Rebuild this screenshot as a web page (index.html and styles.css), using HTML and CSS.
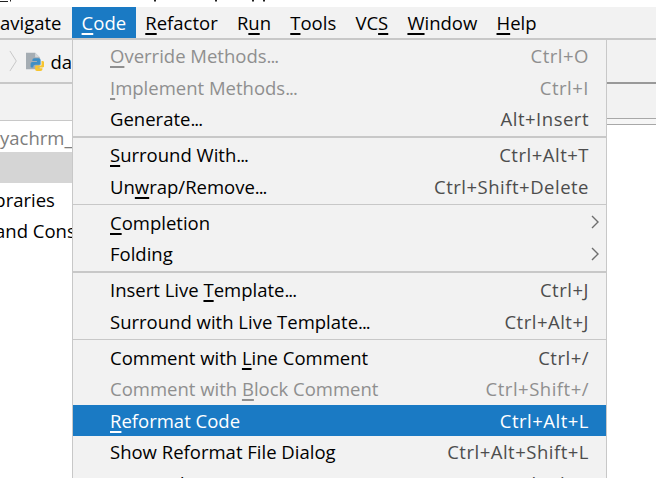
FILE: index.html
```html
<!DOCTYPE html>
<html lang="en">
<head>
<meta charset="utf-8">
<title>Code menu</title>
<link rel="stylesheet" href="styles.css">
</head>
<body>
<div class="strip">
  <svg class="strip-marks" width="656" height="7" viewBox="0 0 656 7">
    <path d="M0 1h8v1H0zM10 0h1v1.5h-1zM154 0h2v1.5h-2zM215 0h2v1.5h-2zM252 0h2v1.5h-2zM263 0h2v1.5h-2z" fill="#222"/>
  </svg>
</div>
<div class="menubar">
  <span class="top top-first">avigate</span>
  <span class="top active"><u>C</u>ode</span>
  <span class="top"><u>R</u>efactor</span>
  <span class="top">R<u>u</u>n</span>
  <span class="top"><u>T</u>ools</span>
  <span class="top">VC<u>S</u></span>
  <span class="top"><u>W</u>indow</span>
  <span class="top"><u>H</u>elp</span>
</div>
<div class="workspace">
  <div class="left">
    <div class="breadcrumb">
      <svg class="crumb-chevron" width="10" height="24" viewBox="0 0 10 24"><path d="M1 1l7 11-7 11" fill="none" stroke="#c4c4c4" stroke-width="1"/></svg>
      <svg class="py" width="20" height="24" viewBox="0 0 20 24">
        <path d="M0 3h10l5 5v13H0z" fill="#a5adb3"/>
        <path d="M10 3l5 5h-5z" fill="#d3d7da"/>
        <path d="M9 9h5a2 2 0 0 1 2 2v5h-6a2 2 0 0 0-2 2v1H6a1 1 0 0 1-1-1v-3a2 2 0 0 1 2-2h5v-1H7v-1a2 2 0 0 1 2-2z" fill="#3f8fc4"/>
        <path d="M17 12h1a2 2 0 0 1 2 2v3a2 2 0 0 1-2 2h-5v1h5v1a2 2 0 0 1-2 2h-4a2 2 0 0 1-2-2v-3a2 2 0 0 1 1-1h5a1 1 0 0 0 1-1z" fill="#f7c52f"/>
      </svg>
      <span class="crumb-name">da</span>
    </div>
    <div class="tabs-left"></div>
    <div class="project-title">yachrm_</div>
    <div class="tree-selected"></div>
    <div class="tree-row tree-libraries">Libraries</div>
    <div class="tree-row tree-scratches">and Consoles</div>
  </div>
  <div class="right">
    <div class="right-bar"></div>
    <div class="right-rule"></div>
    <div class="right-rule-second"></div>
    <em class="hint">的最后</em>
  </div>

  <div class="menu">
    <div class="item off"><span><u>O</u>verride Methods<span class="dots">...</span></span><span class="key">Ctrl+O</span></div>
    <div class="item off"><span><u>I</u>mplement Methods<span class="dots">...</span></span><span class="key">Ctrl+I</span></div>
    <div class="item"><span>Generate<span class="dots">...</span></span><span class="key">Alt+Insert</span></div>
    <div class="sep"></div>
    <div class="item"><span><u>S</u>urround With<span class="dots">...</span></span><span class="key">Ctrl+Alt+T</span></div>
    <div class="item"><span>Un<u>w</u>rap/Remove<span class="dots">...</span></span><span class="key">Ctrl+Shift+Delete</span></div>
    <div class="sep thin"></div>
    <div class="item"><span><u>C</u>ompletion</span><svg class="arrow" width="9" height="14" viewBox="0 0 9 14"><path d="M1 1l6 6-6 6" fill="none" stroke="#6e6e6e" stroke-width="1.4"/></svg></div>
    <div class="item"><span>Folding</span><svg class="arrow" width="9" height="14" viewBox="0 0 9 14"><path d="M1 1l6 6-6 6" fill="none" stroke="#6e6e6e" stroke-width="1.4"/></svg></div>
    <div class="sep"></div>
    <div class="item"><span>Insert Live <u>T</u>emplate<span class="dots">...</span></span><span class="key">Ctrl+J</span></div>
    <div class="item"><span>Surround with Live Template<span class="dots">...</span></span><span class="key">Ctrl+Alt+J</span></div>
    <div class="sep thin"></div>
    <div class="item"><span>Comment with <u>L</u>ine Comment</span><span class="key">Ctrl+/</span></div>
    <div class="item off"><span>Comment with <u>B</u>lock Comment</span><span class="key">Ctrl+Shift+/</span></div>
    <div class="item hot"><span><u>R</u>eformat Code</span><span class="key">Ctrl+Alt+L</span></div>
    <div class="item"><span>Show Reformat File Dialog</span><span class="key">Ctrl+Alt+Shift+L</span></div>
    <div class="item"><span>Auto-Indent Lines</span><span class="key">Ctrl+Alt+I</span></div>
  </div>
</div>
</body>
</html>
```
FILE: styles.css
```css
html, body {
  margin: 0;
  height: 100%;
  overflow: hidden;
  background: #fff;
  color: #000;
  font-family: "Open Sans", "Noto Sans", sans-serif;
  font-size: 18.5px;
}
u { text-underline-offset: 3px; text-decoration-thickness: 1.5px; }
.strip { height: 7px; background: #fff; }
.strip-marks { display: block; }
.menubar {
  height: 31px;
  background: #f2f2f2;
  display: flex;
  align-items: center;
  border-bottom: 2px solid #c8c8c8;
}
.top { padding: 0 9.6px; height: 31px; line-height: 31px; white-space: nowrap; }
.top-first { width: 72px; padding: 0; box-sizing: border-box; }
.active { background: #1a7ac4; color: #fff; }
.workspace { position: relative; height: 438px; display: flex; }
.left { width: 72px; overflow: hidden; }
.right { position: relative; flex: 1; overflow: hidden; }
.breadcrumb {
  height: 42px;
  background: #f2f2f2;
  border-bottom: 2px solid #c8c8c8;
  display: flex;
  align-items: center;
  padding-left: 9px;
  gap: 8px;
}
.crumb-name { margin-left: -2px; }
.tabs-left { height: 36px; background: #f2f2f2; border-bottom: 1px solid #c8c8c8; }
.project-title { height: 31px; line-height: 33px; color: #7d7d7d; white-space: nowrap; }
.tree-selected { height: 31px; background: #d5d5d5; }
.tree-row { height: 31px; line-height: 31px; white-space: nowrap; }
.tree-libraries { margin-top: 1px; text-indent: -20px; }
.tree-scratches { text-indent: -5px; }
.right-bar { height: 42px; background: #f2f2f2; border-bottom: 2px solid #999; }
.right-rule { height: 34px; background: #f2f2f2; border-bottom: 1px solid #a8a8a8; }
.right-rule-second { height: 5px; background: #f6f6f6; border-bottom: 1px solid #a8a8a8; }
.hint { position: absolute; left: -2px; top: 233px; color: #8a8a8a; font-family: "Noto Sans CJK SC", sans-serif; font-size: 17px; }
.menu {
  position: absolute;
  left: 72px;
  top: 0;
  width: 533px;
  background: #f2f2f2;
  border: solid #c8c8c8;
  border-width: 0 1px 0 1px;
}
.item {
  height: 31.5px;
  line-height: 31.5px;
  padding: 0 17px 0 37px;
  display: flex;
  justify-content: space-between;
  align-items: center;
  white-space: nowrap;
}
.dots { letter-spacing: -1px; }
.key { color: #4d4d4d; letter-spacing: 0.5px; }
.off, .off .key { color: #8f8f8f; }
.hot, .hot .key { background: #1a7ac4; color: #fff; }
.arrow { margin-right: -11px; }
.sep { height: 2px; margin: 1px 0 1.5px; background: #c8c8c8; }
.thin { height: 1px; margin: 1.5px 0 2px; }
```
